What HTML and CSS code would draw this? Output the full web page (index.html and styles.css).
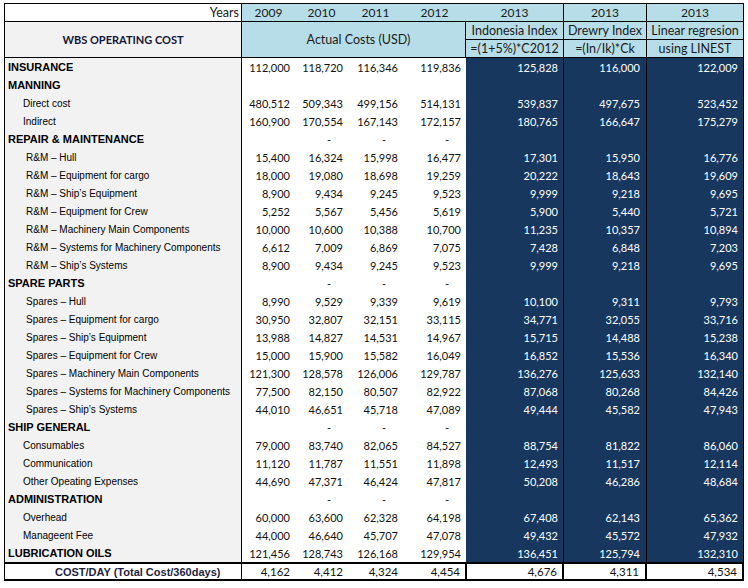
FILE: index.html
```html
<!DOCTYPE html>
<html lang="en">
<head>
<meta charset="utf-8">
<title>WBS Operating Cost</title>
<link rel="stylesheet" href="styles.css">
</head>
<body>
<div class="sheet">
  <div class="head">
    <div class="h-years">Years</div>
    <div class="h-yr">2009</div>
    <div class="h-yr">2010</div>
    <div class="h-yr">2011</div>
    <div class="h-yr">2012</div>
    <div class="h-yr h-edge">2013</div>
    <div class="h-yr h-edge">2013</div>
    <div class="h-yr h-edge">2013</div>
    <div class="h-title">WBS OPERATING COST</div>
    <div class="h-actual">Actual Costs (USD)</div>
    <div class="h-sub">Indonesia Index</div>
    <div class="h-sub">Drewry Index</div>
    <div class="h-sub">Linear regresion</div>
    <div class="h-sub">=(1+5%)*C2012</div>
    <div class="h-sub">=(In/Ik)*Ck</div>
    <div class="h-sub">using LINEST</div>
  </div>

  <div class="row"><div class="lbl cat">INSURANCE</div><div class="n">112,000</div><div class="n">118,720</div><div class="n">116,346</div><div class="n">119,836</div><div class="d">125,828</div><div class="d d2">116,000</div><div class="d d3">122,009</div></div>
  <div class="row"><div class="lbl cat">MANNING</div><div class="n"></div><div class="n"></div><div class="n"></div><div class="n"></div><div class="d"></div><div class="d d2"></div><div class="d d3"></div></div>
  <div class="row"><div class="lbl sub">Direct cost</div><div class="n">480,512</div><div class="n">509,343</div><div class="n">499,156</div><div class="n">514,131</div><div class="d">539,837</div><div class="d d2">497,675</div><div class="d d3">523,452</div></div>
  <div class="row"><div class="lbl sub">Indirect</div><div class="n">160,900</div><div class="n">170,554</div><div class="n">167,143</div><div class="n">172,157</div><div class="d">180,765</div><div class="d d2">166,647</div><div class="d d3">175,279</div></div>
  <div class="row"><div class="lbl cat">REPAIR &amp; MAINTENANCE</div><div class="n"></div><div class="n dash">-</div><div class="n dash">-</div><div class="n dash">-</div><div class="d"></div><div class="d d2"></div><div class="d d3"></div></div>
  <div class="row"><div class="lbl sub2">R&amp;M – Hull</div><div class="n">15,400</div><div class="n">16,324</div><div class="n">15,998</div><div class="n">16,477</div><div class="d">17,301</div><div class="d d2">15,950</div><div class="d d3">16,776</div></div>
  <div class="row"><div class="lbl sub2">R&amp;M – Equipment for cargo</div><div class="n">18,000</div><div class="n">19,080</div><div class="n">18,698</div><div class="n">19,259</div><div class="d">20,222</div><div class="d d2">18,643</div><div class="d d3">19,609</div></div>
  <div class="row"><div class="lbl sub2">R&amp;M – Ship’s Equipment</div><div class="n">8,900</div><div class="n">9,434</div><div class="n">9,245</div><div class="n">9,523</div><div class="d">9,999</div><div class="d d2">9,218</div><div class="d d3">9,695</div></div>
  <div class="row"><div class="lbl sub2">R&amp;M – Equipment for Crew</div><div class="n">5,252</div><div class="n">5,567</div><div class="n">5,456</div><div class="n">5,619</div><div class="d">5,900</div><div class="d d2">5,440</div><div class="d d3">5,721</div></div>
  <div class="row"><div class="lbl sub2">R&amp;M – Machinery Main Components</div><div class="n">10,000</div><div class="n">10,600</div><div class="n">10,388</div><div class="n">10,700</div><div class="d">11,235</div><div class="d d2">10,357</div><div class="d d3">10,894</div></div>
  <div class="row"><div class="lbl sub2">R&amp;M – Systems for Machinery Components</div><div class="n">6,612</div><div class="n">7,009</div><div class="n">6,869</div><div class="n">7,075</div><div class="d">7,428</div><div class="d d2">6,848</div><div class="d d3">7,203</div></div>
  <div class="row"><div class="lbl sub2">R&amp;M – Ship’s Systems</div><div class="n">8,900</div><div class="n">9,434</div><div class="n">9,245</div><div class="n">9,523</div><div class="d">9,999</div><div class="d d2">9,218</div><div class="d d3">9,695</div></div>
  <div class="row"><div class="lbl cat">SPARE PARTS</div><div class="n"></div><div class="n dash">-</div><div class="n dash">-</div><div class="n dash">-</div><div class="d"></div><div class="d d2"></div><div class="d d3"></div></div>
  <div class="row"><div class="lbl sub2">Spares – Hull</div><div class="n">8,990</div><div class="n">9,529</div><div class="n">9,339</div><div class="n">9,619</div><div class="d">10,100</div><div class="d d2">9,311</div><div class="d d3">9,793</div></div>
  <div class="row"><div class="lbl sub2">Spares – Equipment for cargo</div><div class="n">30,950</div><div class="n">32,807</div><div class="n">32,151</div><div class="n">33,115</div><div class="d">34,771</div><div class="d d2">32,055</div><div class="d d3">33,716</div></div>
  <div class="row"><div class="lbl sub2">Spares – Ship’s Equipment</div><div class="n">13,988</div><div class="n">14,827</div><div class="n">14,531</div><div class="n">14,967</div><div class="d">15,715</div><div class="d d2">14,488</div><div class="d d3">15,238</div></div>
  <div class="row"><div class="lbl sub2">Spares – Equipment for Crew</div><div class="n">15,000</div><div class="n">15,900</div><div class="n">15,582</div><div class="n">16,049</div><div class="d">16,852</div><div class="d d2">15,536</div><div class="d d3">16,340</div></div>
  <div class="row"><div class="lbl sub2">Spares – Machinery Main Components</div><div class="n">121,300</div><div class="n">128,578</div><div class="n">126,006</div><div class="n">129,787</div><div class="d">136,276</div><div class="d d2">125,633</div><div class="d d3">132,140</div></div>
  <div class="row"><div class="lbl sub2">Spares – Systems for Machinery Components</div><div class="n">77,500</div><div class="n">82,150</div><div class="n">80,507</div><div class="n">82,922</div><div class="d">87,068</div><div class="d d2">80,268</div><div class="d d3">84,426</div></div>
  <div class="row"><div class="lbl sub2">Spares – Ship’s Systems</div><div class="n">44,010</div><div class="n">46,651</div><div class="n">45,718</div><div class="n">47,089</div><div class="d">49,444</div><div class="d d2">45,582</div><div class="d d3">47,943</div></div>
  <div class="row"><div class="lbl cat">SHIP GENERAL</div><div class="n"></div><div class="n dash">-</div><div class="n dash">-</div><div class="n dash">-</div><div class="d"></div><div class="d d2"></div><div class="d d3"></div></div>
  <div class="row"><div class="lbl sub">Consumables</div><div class="n">79,000</div><div class="n">83,740</div><div class="n">82,065</div><div class="n">84,527</div><div class="d">88,754</div><div class="d d2">81,822</div><div class="d d3">86,060</div></div>
  <div class="row"><div class="lbl sub">Communication</div><div class="n">11,120</div><div class="n">11,787</div><div class="n">11,551</div><div class="n">11,898</div><div class="d">12,493</div><div class="d d2">11,517</div><div class="d d3">12,114</div></div>
  <div class="row"><div class="lbl sub">Other Opeating Expenses</div><div class="n">44,690</div><div class="n">47,371</div><div class="n">46,424</div><div class="n">47,817</div><div class="d">50,208</div><div class="d d2">46,286</div><div class="d d3">48,684</div></div>
  <div class="row"><div class="lbl cat">ADMINISTRATION</div><div class="n"></div><div class="n dash">-</div><div class="n dash">-</div><div class="n dash">-</div><div class="d"></div><div class="d d2"></div><div class="d d3"></div></div>
  <div class="row"><div class="lbl sub">Overhead</div><div class="n">60,000</div><div class="n">63,600</div><div class="n">62,328</div><div class="n">64,198</div><div class="d">67,408</div><div class="d d2">62,143</div><div class="d d3">65,362</div></div>
  <div class="row"><div class="lbl sub">Manageent Fee</div><div class="n">44,000</div><div class="n">46,640</div><div class="n">45,707</div><div class="n">47,078</div><div class="d">49,432</div><div class="d d2">45,572</div><div class="d d3">47,932</div></div>
  <div class="row"><div class="lbl cat">LUBRICATION OILS</div><div class="n">121,456</div><div class="n">128,743</div><div class="n">126,168</div><div class="n">129,954</div><div class="d">136,451</div><div class="d d2">125,794</div><div class="d d3">132,310</div></div>

  <div class="row total">
    <div class="t-lbl">COST/DAY (Total Cost/360days)</div>
    <div class="t-n">4,162</div>
    <div class="t-n">4,412</div>
    <div class="t-n">4,324</div>
    <div class="t-n t-end">4,454</div>
    <div class="t-n t-box">4,676</div>
    <div class="t-n t-box t2">4,311</div>
    <div class="t-n t-box">4,534</div>
  </div>
</div>
</body>
</html>
```
FILE: styles.css
```css
* {
  box-sizing: border-box;
  margin: 0;
  padding: 0;
}

body {
  margin: 0;
  padding: 3px 0 0 4px;
  background: #ffffff;
  font-family: Lato, "Liberation Sans", sans-serif;
  color: #000;
}

.sheet {
  width: 740px;
  border-left: 1px solid #000;
  border-top: 1px solid #000;
}

.head,
.row {
  display: grid;
  grid-template-columns: 237px 53px 53px 55px 63px 98px 83px 97px;
}

.head {
  grid-template-rows: 18px 18px 18px;
  font-size: 12.5px;
  color: #1a1a1a;
}

.head > div {
  display: flex;
  align-items: center;
  justify-content: center;
  border-bottom: 1px solid #000;
  white-space: nowrap;
}

.h-years {
  background: #fff;
  border-right: 1px solid #000;
  justify-content: flex-end !important;
  padding-right: 2px;
  font-size: 12.5px;
}

.h-yr {
  background: #b7dee8;
  font-size: 12px;
}

.h-edge {
  border-right: 1px solid #000;
}

.h-title {
  grid-row: span 2;
  background: #f2f2f2;
  border-right: 1px solid #000;
  font-weight: 700;
  font-size: 11px;
  color: #14163a;
}

.h-actual {
  grid-column: span 4;
  grid-row: span 2;
  background: #b7dee8;
  border-right: 1px solid #000;
  padding-left: 10px;
}

.h-sub {
  background: #b7dee8;
  border-right: 1px solid #000;
}

.row {
  height: 18px;
}

.row > div {
  display: flex;
  align-items: center;
  white-space: nowrap;
}

.lbl {
  background: #f2f2f2;
  border-right: 1px solid #000;
  font-family: "Liberation Sans", Arial, sans-serif;
  color: #000;
}

.cat {
  font-weight: 700;
  font-size: 11px;
  padding-left: 3px;
}

.sub {
  font-size: 10px;
  padding-left: 18px;
}

.sub2 {
  font-size: 10px;
  padding-left: 21px;
}

.n,
.d {
  justify-content: flex-end;
  padding-right: 5px;
  font-size: 11px;
}

.n {
  background: #fff;
  color: #111;
}

.n.dash {
  padding-right: 17px;
}

.d {
  background: #17375e;
  color: #fff;
  border-right: 1px solid #000;
}

.d2 {
  padding-right: 6px;
}

.total {
  height: 19px;
}

.total > div {
  border-top: 2px solid #000;
  border-bottom: 2px solid #000;
  background: #fff;
}

.t-lbl {
  box-shadow: -1px 0 0 #000;
  border-right: 1px solid #000;
  font-family: "Liberation Sans", Arial, sans-serif;
  font-weight: 700;
  font-size: 11px;
  color: #1c1f3d;
  padding-left: 50px;
}

.t-n {
  justify-content: flex-end;
  padding-right: 5px;
  font-size: 11.5px;
  color: #111;
}

.t-end {
  border-right: 1px solid #000;
}

.t-box {
  border-left: 1px solid #000;
  border-right: 2px solid #000;
}

.t-box + .t-box {
  border-left: none;
}

.t2 {
  padding-right: 6px;
}
```
